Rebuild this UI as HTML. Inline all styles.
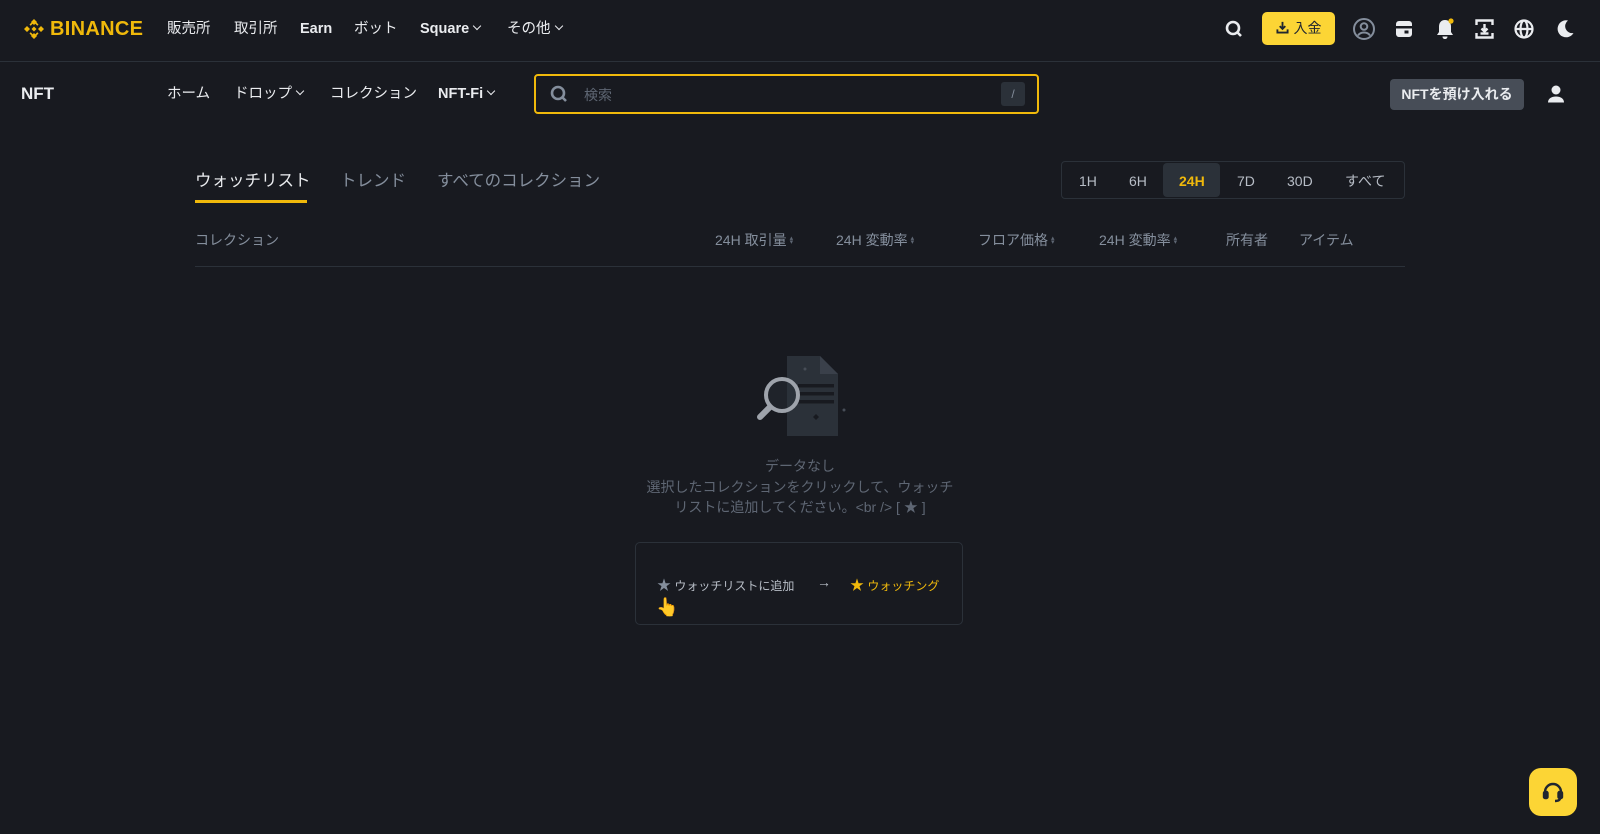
<!DOCTYPE html>
<html><head><meta charset="utf-8"><style>
*{margin:0;padding:0;box-sizing:border-box}
body{width:1600px;height:834px;background:#181a20;color:#eaecef;font-family:"Liberation Sans","Noto Sans CJK JP",sans-serif;position:relative;overflow:hidden}
.a{position:absolute;white-space:nowrap}
.nav{font-size:14.5px;color:#eaecef;top:19px;line-height:20px;height:20px}
.nav2{font-size:14.5px;color:#eaecef;top:84px;line-height:20px;height:20px}
.chev{display:inline-block;width:6px;height:6px;border-right:1.6px solid #eaecef;border-bottom:1.6px solid #eaecef;transform:rotate(45deg);margin-left:5px;vertical-align:4px}
.col{font-size:14px;color:#848e9c;top:230px;line-height:20px}
.sort{display:inline-block;font-size:7px;line-height:4px;vertical-align:middle;margin-left:3px;color:#5e6673}
.per{font-size:14px;color:#b7bdc6;top:171px;line-height:20px}
</style></head><body>
<svg class="a" style="left:22px;top:17px" width="24" height="24" viewBox="0 0 24 24" fill="#f0b90b"><path d="M12 2l3 3-3 3-3-3zM5 9l3 3-3 3-3-3zM19 9l3 3-3 3-3-3zM12 16l3 3-3 3-3-3zM12 9.5l2.5 2.5-2.5 2.5-2.5-2.5z"/><path d="M7.5 7.5L12 3l4.5 4.5-1.2 1.2L12 5.4 8.7 8.7zM7.5 16.5L12 21l4.5-4.5-1.2-1.2L12 18.6l-3.3-3.3z"/></svg>
<div class="a" style="left:50px;top:17px;font-size:20px;line-height:24px;font-weight:bold;color:#f0b90b;letter-spacing:.3px">BINANCE</div>
<div class="a nav" style="left:167px">販売所</div>
<div class="a nav" style="left:234px">取引所</div>
<div class="a nav" style="left:300px;font-weight:bold">Earn</div>
<div class="a nav" style="left:354px">ボット</div>
<div class="a nav" style="left:420px;font-weight:bold">Square<span class="chev"></span></div>
<div class="a nav" style="left:507px">その他<span class="chev"></span></div>
<svg class="a" style="left:1224px;top:19px" width="20" height="20" viewBox="0 0 20 20" fill="none" stroke="#eaecef" stroke-width="2.6"><circle cx="9" cy="9" r="6"/><path d="M13.5 13.5l3.5 3.5"/></svg>
<div class="a" style="left:1262px;top:12px;width:73px;height:33px;background:#fcd535;border-radius:5px;color:#202630;font-size:14px;line-height:33px;text-align:center"><svg width="13" height="13" viewBox="0 0 14 14" style="vertical-align:-1px;margin-right:5px" fill="none" stroke="#202630" stroke-width="2"><path d="M7 1v7M4 5.5L7 8.5 10 5.5M1.5 9v3.5h11V9"/></svg>入金</div>
<svg class="a" style="left:1352px;top:17px" width="24" height="24" viewBox="0 0 24 24" fill="none" stroke="#848e9c" stroke-width="2"><circle cx="12" cy="12" r="10"/><circle cx="12" cy="9.5" r="3.3"/><path d="M6 18.5c1.5-2.3 3.6-3 6-3s4.5.7 6 3"/></svg>
<svg class="a" style="left:1395px;top:20px" width="18" height="18" viewBox="0 0 18 18"><rect x="1" y="1" width="16" height="16" rx="3" fill="#eaecef"/><rect x="1" y="6" width="16" height="2.5" fill="#181a20"/><rect x="9.5" y="10.5" width="4" height="3" fill="#181a20"/></svg>
<svg class="a" style="left:1434px;top:17px" width="22" height="24" viewBox="0 0 22 24" fill="#eaecef"><path d="M11 3c-4 0-6 3-6 6.5V15l-2 3h16l-2-3V9.5C17 6 15 3 11 3zM8.5 19.5h5c0 1.5-1 2.5-2.5 2.5s-2.5-1-2.5-2.5z"/><circle cx="17" cy="4" r="2.6" fill="#f0b90b"/></svg>
<svg class="a" style="left:1475px;top:19px" width="19" height="20" viewBox="0 0 19 20" fill="none" stroke="#eaecef" stroke-width="2.4"><path d="M1.5 6V1.5h16V6M1.5 14v4.5h16V14"/><path d="M9.5 5v7M6.5 9.5L9.5 12.5 12.5 9.5" /><path d="M5.5 14.5h8"/></svg>
<svg class="a" style="left:1514px;top:19px" width="20" height="20" viewBox="0 0 20 20" fill="none" stroke="#eaecef" stroke-width="2.2"><circle cx="10" cy="10" r="8.5"/><ellipse cx="10" cy="10" rx="3.5" ry="8.5"/><path d="M1.5 10h17"/></svg>
<svg class="a" style="left:1555px;top:19px" width="20" height="20" viewBox="0 0 20 20" fill="#eaecef"><path d="M13 1.5A8.5 8.5 0 1 0 18.5 14 7 7 0 0 1 13 1.5z"/></svg>
<div class="a" style="left:0;top:61px;width:1600px;height:1px;background:#2b3139"></div>
<div class="a" style="left:21px;top:84px;font-size:17px;line-height:20px;font-weight:bold">NFT</div>
<div class="a nav2" style="left:167px">ホーム</div>
<div class="a nav2" style="left:234px">ドロップ<span class="chev"></span></div>
<div class="a nav2" style="left:330px">コレクション</div>
<div class="a nav2" style="left:438px;font-weight:bold">NFT-Fi<span class="chev"></span></div>
<div class="a" style="left:534px;top:74px;width:505px;height:40px;border:2px solid #f0b90b;border-radius:4px"></div>
<svg class="a" style="left:549px;top:84px" width="20" height="20" viewBox="0 0 20 20" fill="none" stroke="#848e9c" stroke-width="2.6"><circle cx="9" cy="9" r="6"/><path d="M13.5 13.5l3.5 3.5"/></svg>
<div class="a" style="left:584px;top:85px;font-size:14px;color:#5e6673">検索</div>
<div class="a" style="left:1001px;top:82px;width:24px;height:24px;background:#2b3139;border-radius:3px;color:#848e9c;font-size:12px;text-align:center;line-height:24px">/</div>
<div class="a" style="left:1390px;top:79px;width:134px;height:31px;background:#474d57;border-radius:4px;font-size:14px;font-weight:bold;text-align:center;line-height:31px">NFTを預け入れる</div>
<svg class="a" style="left:1546px;top:84px" width="20" height="20" viewBox="0 0 20 20" fill="#eaecef"><circle cx="10" cy="6" r="4.5"/><path d="M2 18.5c0-4 3.5-6 8-6s8 2 8 6z"/></svg>
<div class="a" style="left:195px;top:169px;font-size:16.5px;line-height:24px;color:#eaecef">ウォッチリスト</div>
<div class="a" style="left:195px;top:200px;width:112px;height:3px;background:#f0b90b"></div>
<div class="a" style="left:340px;top:169px;font-size:16.5px;line-height:24px;color:#848e9c">トレンド</div>
<div class="a" style="left:437px;top:169px;font-size:16.5px;line-height:24px;color:#848e9c">すべてのコレクション</div>
<div class="a" style="left:1061px;top:161px;width:344px;height:38px;border:1px solid #2b3139;border-radius:4px"></div>
<div class="a" style="left:1163px;top:163px;width:57px;height:34px;background:#2b3139;border-radius:4px"></div>
<div class="a per" style="left:1079px">1H</div>
<div class="a per" style="left:1129px">6H</div>
<div class="a per" style="left:1179px;color:#f0b90b;font-weight:bold">24H</div>
<div class="a per" style="left:1237px">7D</div>
<div class="a per" style="left:1287px">30D</div>
<div class="a per" style="left:1345px">すべて</div>
<div class="a col" style="left:195px">コレクション</div>
<div class="a col" style="left:715px">24H 取引量<span class="sort">▴<br>▾</span></div>
<div class="a col" style="left:836px">24H 変動率<span class="sort">▴<br>▾</span></div>
<div class="a col" style="left:978px">フロア価格<span class="sort">▴<br>▾</span></div>
<div class="a col" style="left:1099px">24H 変動率<span class="sort">▴<br>▾</span></div>
<div class="a col" style="left:1226px">所有者</div>
<div class="a col" style="left:1299px">アイテム</div>
<div class="a" style="left:195px;top:266px;width:1210px;height:1px;background:#2b3139"></div>
<svg class="a" style="left:752px;top:354px" width="96" height="86" viewBox="0 0 96 86"><path d="M35 2h33l18 18v62H35z" fill="#2b3139"/><path d="M68 2v18h18z" fill="#3a404a"/><rect x="46" y="30" width="36" height="3.5" fill="#181a20"/><rect x="46" y="38" width="36" height="3.5" fill="#181a20"/><rect x="46" y="46" width="36" height="3.5" fill="#181a20"/><path d="M64 60l3 3-3 3-3-3z" fill="#181a20"/><circle cx="30" cy="41" r="16" fill="#2b3139" fill-opacity=".4" stroke="#9ea3ab" stroke-width="4"/><path d="M18 53L8 63" stroke="#9ea3ab" stroke-width="6" stroke-linecap="round"/><circle cx="92" cy="56" r="1.5" fill="#474d57"/><circle cx="53" cy="15" r="1.5" fill="#474d57"/></svg>
<div class="a" style="left:600px;top:456px;width:400px;text-align:center;font-size:14px;line-height:20.5px;color:#5e6673;white-space:normal">データなし<br>選択したコレクションをクリックして、ウォッチ<br>リストに追加してください。&lt;br /&gt; [ ★ ]</div>
<div class="a" style="left:635px;top:542px;width:328px;height:83px;border:1px solid #2b3139;border-radius:5px"></div>
<div class="a" style="left:657px;top:575px;font-size:12px;color:#b7bdc6"><span style="color:#848e9c;font-size:14px">★</span> ウォッチリストに追加</div>
<div class="a" style="left:817px;top:574px;font-size:14px;color:#b7bdc6">→</div>
<div class="a" style="left:850px;top:575px;font-size:12px;color:#f0b90b"><span style="font-size:14px">★</span> ウォッチング</div>
<div class="a" style="left:656px;top:597px;font-size:18px">👆</div>
<div class="a" style="left:1529px;top:768px;width:48px;height:48px;background:#fcd535;border-radius:12px"></div>
<svg class="a" style="left:1541px;top:780px" width="24" height="24" viewBox="0 0 24 24" fill="none" stroke="#202630" stroke-width="2.4"><path d="M4 14v-2a8 8 0 0 1 16 0v2"/><rect x="3" y="12" width="3.5" height="6" rx="1" fill="#202630"/><rect x="17.5" y="12" width="3.5" height="6" rx="1" fill="#202630"/><path d="M19 18c0 2-2 3-5 3"/></svg>
</body></html>
